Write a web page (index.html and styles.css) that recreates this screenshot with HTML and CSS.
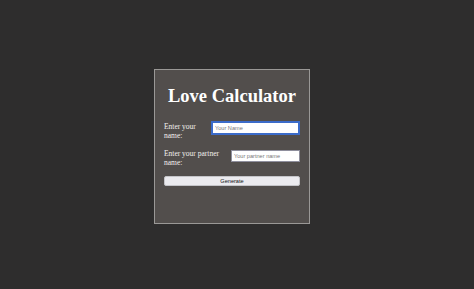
FILE: index.html
```html
<!DOCTYPE html>
<html>
<head>
<meta charset="utf-8">
<link rel="stylesheet" href="styles.css">
</head>
<body>
<div class="card">
  <h1 class="title">Love Calculator</h1>
  <div class="row">
    <label class="label">Enter your<br>name:</label>
    <input class="input input-focus" type="text" placeholder="Your Name">
  </div>
  <div class="row row2">
    <label class="label">Enter your partner<br>name:</label>
    <input class="input input-narrow" type="text" placeholder="Your partner name">
  </div>
  <button class="btn">Generate</button>
</div>
</body>
</html>
```
FILE: styles.css
```css
html, body {
  margin: 0;
  padding: 0;
  background: #2e2d2d;
  height: 100%;
}
body {
  font-family: "Liberation Serif", "Times New Roman", serif;
}
.card {
  box-sizing: border-box;
  width: 156px;
  height: 155px;
  margin: 69px 0 0 154px;
  background: #524e4c;
  border: 1px solid #9a9896;
  padding: 0 9px 0 9px;
  display: flex;
  flex-direction: column;
}
.title {
  margin: 15px 0 0 0;
  font-size: 18.5px;
  font-weight: bold;
  color: #ffffff;
  text-align: center;
  line-height: 22px;
  white-space: nowrap;
}
.row {
  display: flex;
  justify-content: space-between;
  align-items: flex-start;
  margin-top: 15px;
}
.row2 {
  margin-top: 9px;
}
.label {
  color: #f2f0ee;
  font-size: 7.5px;
  line-height: 9px;
}
.input {
  box-sizing: border-box;
  height: 12px;
  padding: 0 2px;
  border: 1px solid #8f8f9d;
  background: #ffffff;
  font-family: "Liberation Sans", Arial, sans-serif;
  font-size: 5.6px;
  color: #333;
  margin: 0;
}
.input::placeholder {
  color: #777;
}
.input-focus {
  width: 87px;
  margin-right: 1px;
  outline: 1.5px solid #3b6bc9;
  border-color: #3b6bc9;
}
.input-narrow {
  width: 69px;
  margin-top: 1px;
}
.btn {
  box-sizing: border-box;
  margin-top: 9px;
  width: 136px;
  height: 10px;
  padding: 0;
  border: 1px solid #c4c4c8;
  border-radius: 2px;
  background: #ebeaee;
  font-family: "Liberation Sans", Arial, sans-serif;
  font-size: 5.6px;
  line-height: 8px;
  color: #111;
}
```
